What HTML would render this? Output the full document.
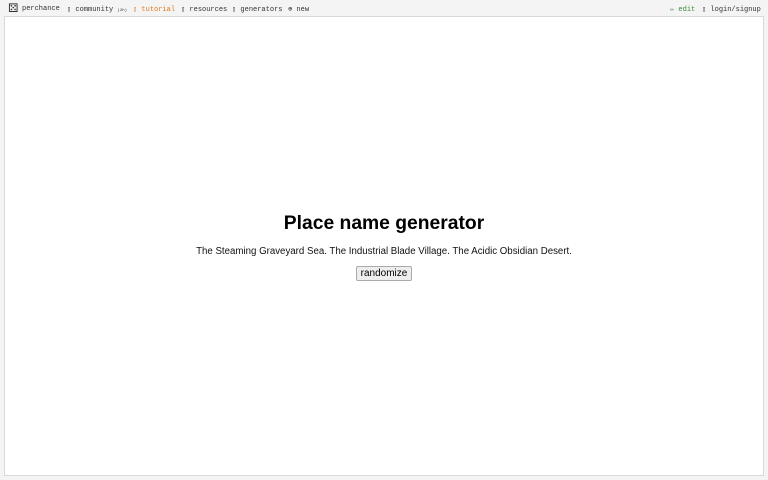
<!DOCTYPE html>
<html><head><style>
body{margin:0;width:768px;height:480px;background:#f4f4f4;overflow:hidden;font-family:"Liberation Sans",sans-serif;}
.nav{position:absolute;top:0;left:0;width:768px;height:16px;font-family:"Liberation Mono",monospace;font-size:7px;color:#333;}
.nav span{position:absolute;top:5px;white-space:nowrap}
.frame{position:absolute;left:4px;top:16px;width:758px;height:458px;background:#fff;border:1px solid #d8d8d8;}
h1{position:absolute;top:196px;left:0;width:758px;text-align:center;font-size:19.3px;margin:0;font-weight:bold;color:#000}
p{position:absolute;top:229px;left:0;width:758px;text-align:center;font-size:9.7px;margin:0;color:#111}
button{position:absolute;top:249px;left:351px;width:56px;height:15px;font-size:10px;font-family:"Liberation Sans",sans-serif;padding:0;background:#eee;border:1px solid #aaa;border-radius:2px;}
</style></head><body>
<div class="nav">
<span style="left:8px;top:1px;font-size:12px;font-family:'DejaVu Sans',sans-serif">⚄</span>
<span style="left:22px">perchance</span>
<span style="left:67px">▯ community <small style="font-size:4px">(2h)</small></span>
<span style="left:133px;color:#e07a20">▯ tutorial</span>
<span style="left:181px">▯ resources</span>
<span style="left:232px">▯ generators</span>
<span style="left:288px">⊕ new</span>
<span style="left:670px;color:#3a8a3a">✏ edit</span>
<span style="left:702px">▯ login/signup</span>
</div>
<div class="frame">
<h1>Place name generator</h1>
<p>The Steaming Graveyard Sea. The Industrial Blade Village. The Acidic Obsidian Desert.</p>
<button>randomize</button>
</div>
</body></html>
